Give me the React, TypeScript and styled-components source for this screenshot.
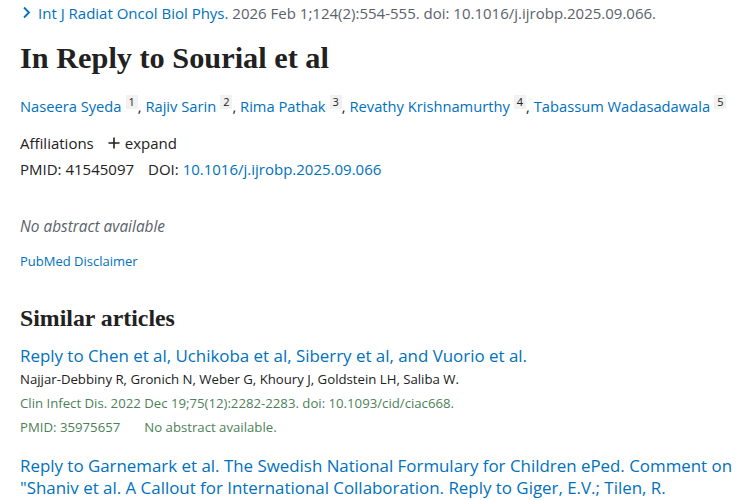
import React from 'react';
import styled, { createGlobalStyle } from 'styled-components';

const GlobalStyle = createGlobalStyle`
  html, body {
    margin: 0;
    padding: 0;
    background: #fff;
  }
  body {
    font-family: 'Open Sans', 'Noto Sans', sans-serif;
    color: #212121;
  }
`;

const Page = styled.main`
  width: 710px;
  padding: 0 20px;
`;

const CitationLine = styled.div`
  display: flex;
  align-items: center;
  gap: 7px;
  height: 25px;
  padding-left: 2px;
  font-size: 15px;
  color: #5b616b;
  white-space: nowrap;
`;

const Link = styled.a`
  color: #0071bc;
  text-decoration: none;
`;

const Title = styled.h1`
  font-family: 'Liberation Serif', 'DejaVu Serif', serif;
  font-weight: 700;
  font-size: 30.3px;
  line-height: 36px;
  margin: 15px 0 0;
  color: #212121;
`;

const Authors = styled.div`
  margin-top: 17px;
  font-size: 14.7px;
  line-height: 26px;
  white-space: nowrap;
`;

const Sup = styled.sup`
  display: inline-block;
  font-size: 11px;
  line-height: 14px;
  padding: 0 3px;
  margin-left: 4px;
  background: #f1f1f1;
  color: #212121;
  vertical-align: 6px;
`;

const MetaLine = styled.div<{ $top?: number }>`
  display: flex;
  align-items: center;
  gap: 14px;
  margin-top: ${(p) => p.$top ?? 0}px;
  font-size: 15px;
  line-height: 26px;
`;

const Expand = styled.span`
  display: inline-flex;
  align-items: center;
  gap: 5px;
`;

const NoAbstract = styled.p`
  margin: 32px 0 0;
  font-size: 15.4px;
  font-style: italic;
  color: #5b616b;
  line-height: 26px;
`;

const Disclaimer = styled.div`
  margin-top: 11px;
  font-size: 13px;
  line-height: 20px;
`;

const SectionTitle = styled.h2`
  font-family: 'Liberation Serif', 'DejaVu Serif', serif;
  font-weight: 700;
  font-size: 23.8px;
  line-height: 30px;
  margin: 32px 0 0;
  color: #212121;
`;

const Docsum = styled.article`
  margin-top: 12px;
  & + & {
    margin-top: 16px;
  }
`;

const DocTitle = styled.a`
  display: block;
  color: #0071bc;
  text-decoration: none;
  font-size: 16.9px;
  line-height: 22px;
  margin-right: -16px;
`;

const DocLine = styled.div<{ $muted?: boolean }>`
  font-size: 13.2px;
  line-height: 24px;
  color: ${(p) => (p.$muted ? '#4d7f59' : '#212121')};
  display: flex;
  gap: 24px;
`;

const Chevron = () => (
  <svg width="9" height="13" viewBox="0 0 9 13">
    <path d="M2 1.5 L7 6.5 L2 11.5" fill="none" stroke="#0071bc" strokeWidth="1.8" />
  </svg>
);

const Plus = () => (
  <svg width="12" height="12" viewBox="0 0 12 12">
    <path d="M6 0.5 V11.5 M0.5 6 H11.5" stroke="#212121" strokeWidth="1.6" />
  </svg>
);

const authors = [
  'Naseera Syeda',
  'Rajiv Sarin',
  'Rima Pathak',
  'Revathy Krishnamurthy',
  'Tabassum Wadasadawala',
];

export default function App() {
  return (
    <>
      <GlobalStyle />
      <Page>
        <CitationLine>
          <Chevron />
          <span>
            <Link>Int J Radiat Oncol Biol Phys.</Link> 2026 Feb 1;124(2):554-555. doi:
            10.1016/j.ijrobp.2025.09.066.
          </span>
        </CitationLine>

        <Title>In Reply to Sourial et al</Title>

        <Authors>
          {authors.map((a, i) => (
            <React.Fragment key={a}>
              <Link>{a}</Link>
              <Sup>{i + 1}</Sup>
              {i < authors.length - 1 ? ', ' : ''}
            </React.Fragment>
          ))}
        </Authors>

        <MetaLine $top={11}>
          <span>Affiliations</span>
          <Expand>
            <Plus />
            expand
          </Expand>
        </MetaLine>
        <MetaLine>
          <span>PMID: 41545097</span>
          <span>
            DOI: <Link>10.1016/j.ijrobp.2025.09.066</Link>
          </span>
        </MetaLine>

        <NoAbstract>No abstract available</NoAbstract>
        <Disclaimer>
          <Link>PubMed Disclaimer</Link>
        </Disclaimer>

        <SectionTitle>Similar articles</SectionTitle>

        <Docsum>
          <DocTitle>
            Reply to Chen et al, Uchikoba et al, Siberry et al, and Vuorio et al.
          </DocTitle>
          <DocLine>
            Najjar-Debbiny R, Gronich N, Weber G, Khoury J, Goldstein LH, Saliba W.
          </DocLine>
          <DocLine $muted>
            Clin Infect Dis. 2022 Dec 19;75(12):2282-2283. doi: 10.1093/cid/ciac668.
          </DocLine>
          <DocLine $muted>
            <span>PMID: 35975657</span>
            <span>No abstract available.</span>
          </DocLine>
        </Docsum>

        <Docsum>
          <DocTitle>
            Reply to Garnemark et al. The Swedish National Formulary for Children ePed.
            Comment on "Shaniv et al. A Callout for International Collaboration. Reply to
            Giger, E.V.; Tilen, R.
          </DocTitle>
        </Docsum>
      </Page>
    </>
  );
}
